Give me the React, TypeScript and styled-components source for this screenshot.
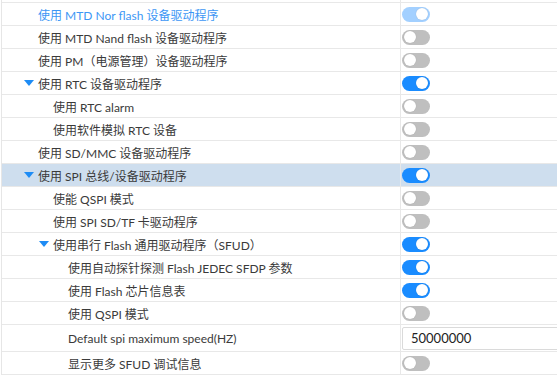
import React from "react";
import styled, { createGlobalStyle, css } from "styled-components";

const Global = createGlobalStyle`
  html, body { margin: 0; padding: 0; background: #fff; overflow: hidden; }
  body { font-family: "Lato", "Noto Sans CJK SC", sans-serif; }
`;

const Frame = styled.div`
  width: 557px;
  height: 375px;
  overflow: hidden;
  padding-left: 1px;
  box-sizing: border-box;
`;

const Table = styled.div`
  width: 720px;
  margin-top: -20px;
  border-left: 1px solid #e6e6e6;
`;

const Row = styled.div<{ $selected?: boolean; $tall?: boolean }>`
  display: grid;
  grid-template-columns: 399px 1fr;
  height: ${(p) => (p.$tall ? 27 : 23)}px;
  box-sizing: border-box;
  border-bottom: 1px solid #e8e8e8;
  background: ${(p) => (p.$selected ? "#cedeee" : "#fff")};
`;

const NameCell = styled.div<{ $level: number; $blue?: boolean }>`
  display: flex;
  align-items: center;
  padding-left: ${(p) => 6 + p.$level * 15}px;
  border-right: 1px solid #e8e8e8;
  font-size: 12px;
  color: ${(p) => (p.$blue ? "#3d97f5" : "#3a3a3a")};
  white-space: nowrap;
  overflow: hidden;
`;

const Expander = styled.span`
  width: 15px;
  flex: none;
  display: flex;
  align-items: center;
`;

const Caret = styled.span`
  width: 0;
  height: 0;
  margin-left: 1px;
  border-left: 5px solid transparent;
  border-right: 5px solid transparent;
  border-top: 6px solid #1e8cf5;
`;

const ValueCell = styled.div`
  display: flex;
  align-items: center;
  padding-left: 1px;
`;

const Track = styled.span<{ $state: "on" | "off" | "dim" }>`
  position: relative;
  width: 28px;
  height: 15px;
  border-radius: 8px;
  flex: none;
  ${(p) =>
    p.$state === "on"
      ? css`background: #1a8cff;`
      : p.$state === "dim"
      ? css`background: #a3d0ff;`
      : css`background: #bfbfbf;`}
`;

const Knob = styled.span<{ $on: boolean }>`
  position: absolute;
  top: 1.5px;
  left: ${(p) => (p.$on ? "14px" : "1.5px")};
  width: 12px;
  height: 12px;
  border-radius: 50%;
  background: #fff;
  box-shadow: 0 0 1px rgba(0, 0, 0, 0.2);
`;

const Input = styled.div`
  width: 300px;
  height: 23px;
  box-sizing: border-box;
  border: 1px solid #dadada;
  border-radius: 2px;
  display: flex;
  align-items: center;
  padding-left: 8px;
  font-family: "Lato", sans-serif;
  font-size: 13px;
  color: #222;
`;

type Item = {
  label: string;
  level: number;
  expand?: boolean;
  value: "on" | "off" | "dim" | string;
  blue?: boolean;
  selected?: boolean;
};

const items: Item[] = [
  { label: "", level: 1, value: "off" },
  { label: "使用 MTD Nor flash 设备驱动程序", level: 1, value: "dim", blue: true },
  { label: "使用 MTD Nand flash 设备驱动程序", level: 1, value: "off" },
  { label: "使用 PM（电源管理）设备驱动程序", level: 1, value: "off" },
  { label: "使用 RTC 设备驱动程序", level: 1, expand: true, value: "on" },
  { label: "使用 RTC alarm", level: 2, value: "off" },
  { label: "使用软件模拟 RTC 设备", level: 2, value: "off" },
  { label: "使用 SD/MMC 设备驱动程序", level: 1, value: "off" },
  { label: "使用 SPI 总线/设备驱动程序", level: 1, expand: true, value: "on", selected: true },
  { label: "使能 QSPI 模式", level: 2, value: "off" },
  { label: "使用 SPI SD/TF 卡驱动程序", level: 2, value: "off" },
  { label: "使用串行 Flash 通用驱动程序（SFUD）", level: 2, expand: true, value: "on" },
  { label: "使用自动探针探测 Flash JEDEC SFDP 参数", level: 3, value: "on" },
  { label: "使用 Flash 芯片信息表", level: 3, value: "on" },
  { label: "使用 QSPI 模式", level: 3, value: "off" },
  { label: "Default spi maximum speed(HZ)", level: 3, value: "50000000" },
  { label: "显示更多 SFUD 调试信息", level: 3, value: "off" },
];

function Toggle({ state }: { state: "on" | "off" | "dim" }) {
  return (
    <Track $state={state}>
      <Knob $on={state !== "off"} />
    </Track>
  );
}

export default function App() {
  return (
    <>
      <Global />
      <Frame>
        <Table>
          {items.map((it, i) => {
            const isToggle = it.value === "on" || it.value === "off" || it.value === "dim";
            return (
              <Row key={i} $selected={it.selected} $tall={!isToggle}>
                <NameCell $level={it.level} $blue={it.blue}>
                  <Expander>{it.expand ? <Caret /> : null}</Expander>
                  {it.label}
                </NameCell>
                <ValueCell>
                  {isToggle ? (
                    <Toggle state={it.value as "on" | "off" | "dim"} />
                  ) : (
                    <Input>{it.value}</Input>
                  )}
                </ValueCell>
              </Row>
            );
          })}
        </Table>
      </Frame>
    </>
  );
}
